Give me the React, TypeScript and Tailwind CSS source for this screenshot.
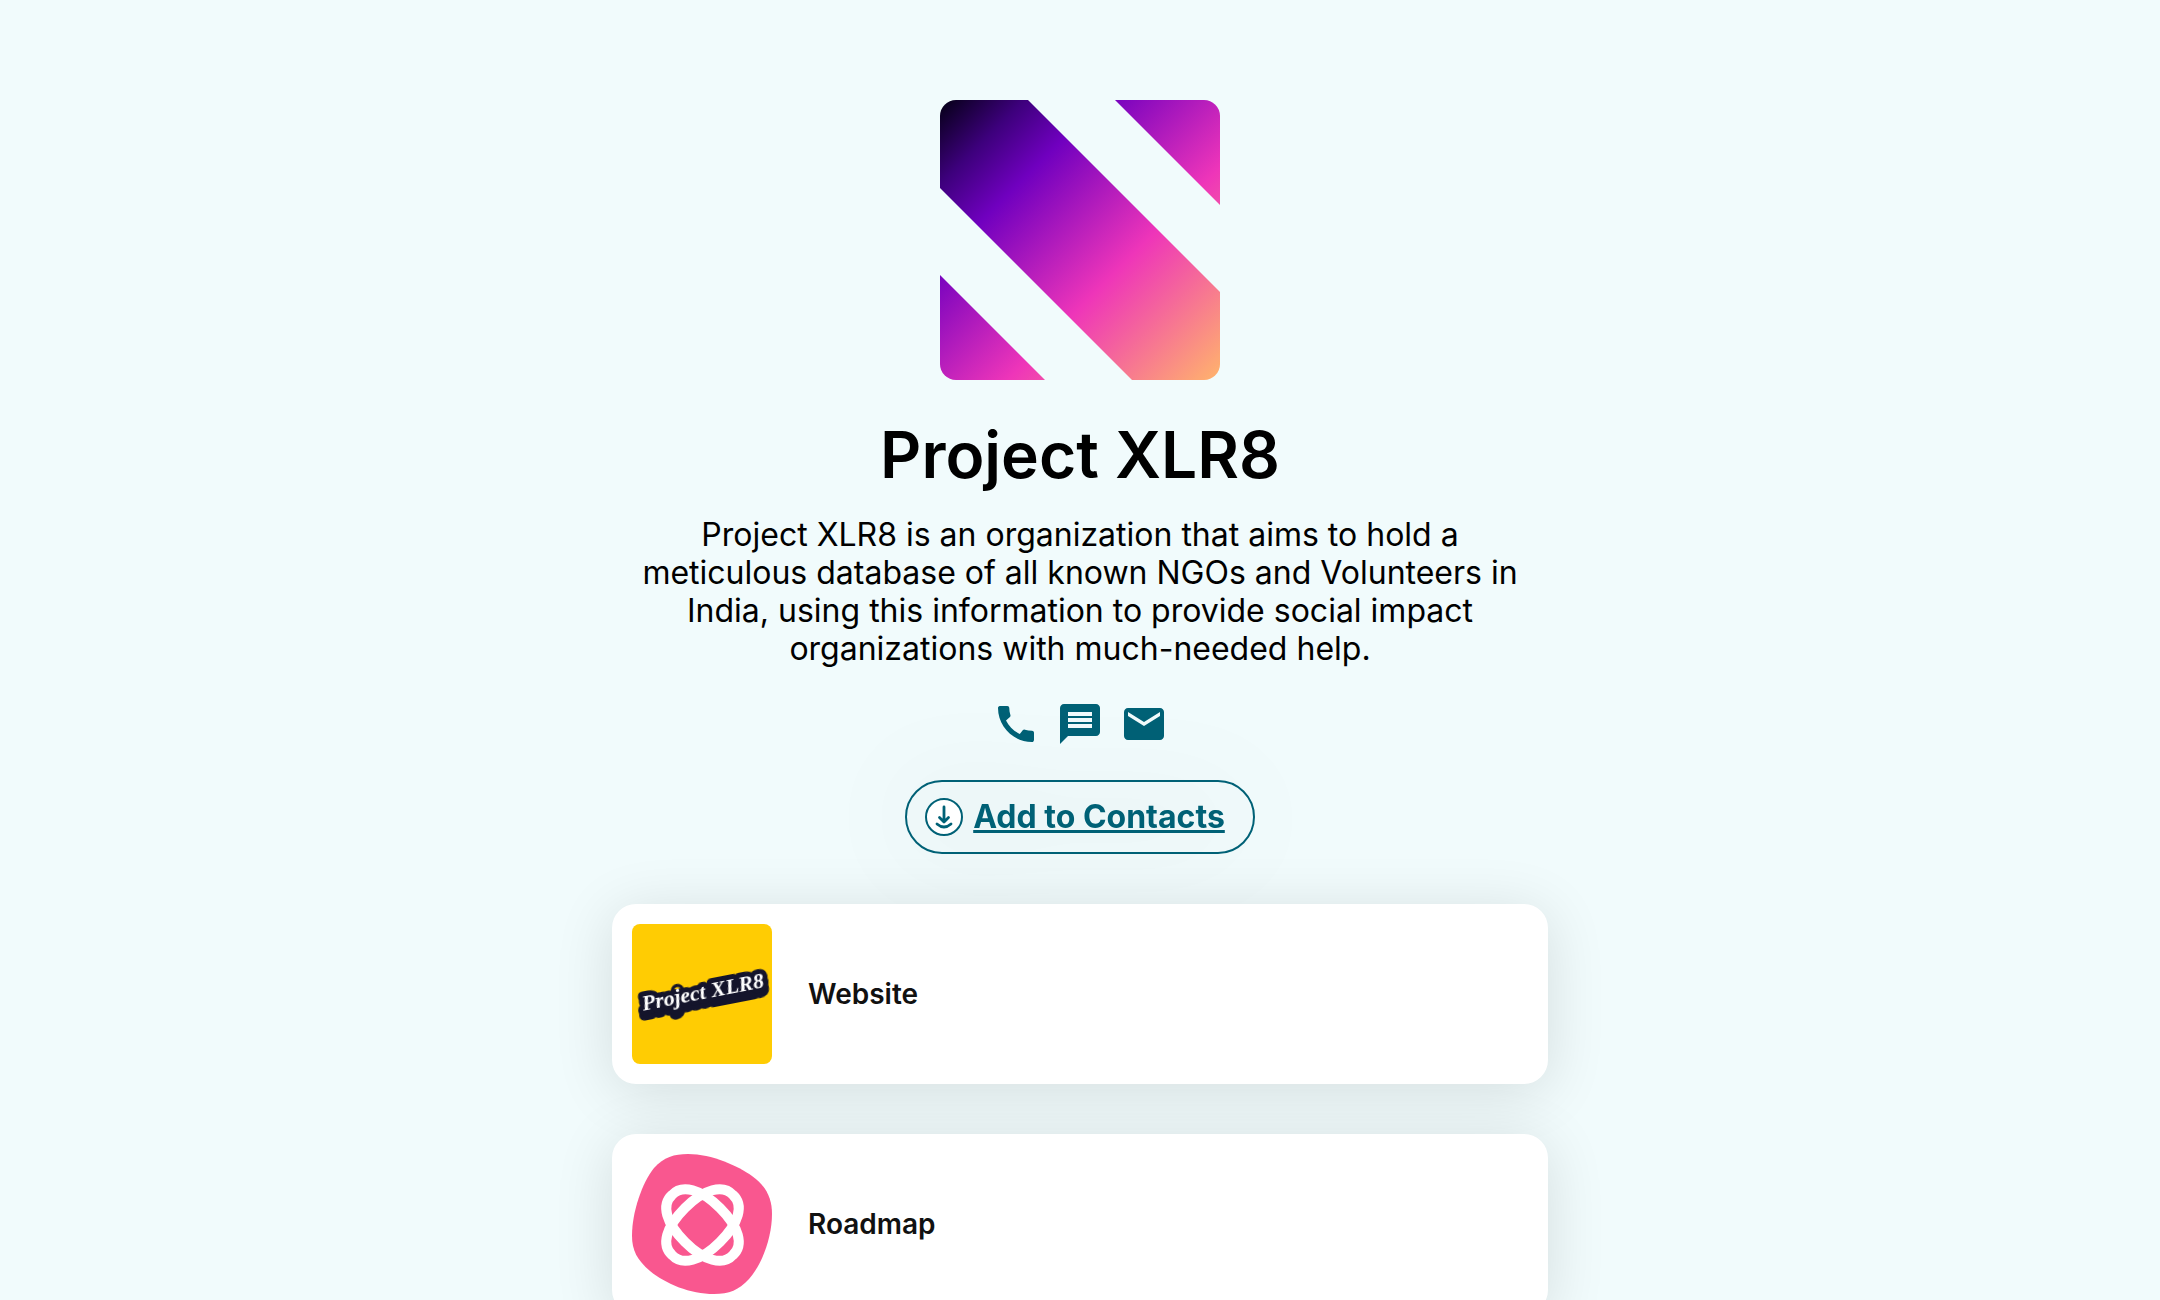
import { MdCall, MdEmail, MdMessage } from "react-icons/md";

const FONT = "font-['Inter',sans-serif] [font-optical-sizing:none]";

function BrandMark() {
  return (
    <svg viewBox="0 0 280 280" className="size-70 rounded-2xl" role="img" aria-label="Project XLR8 logo">
      <defs>
        <linearGradient id="brand" x1="0" y1="0" x2="280" y2="280" gradientUnits="userSpaceOnUse">
          <stop offset="0" stopColor="#040014" />
          <stop offset="0.15" stopColor="#3d007c" />
          <stop offset="0.29" stopColor="#7000bf" />
          <stop offset="0.62" stopColor="#ee35b9" />
          <stop offset="1" stopColor="#ffb46c" />
        </linearGradient>
      </defs>
      <path d="M0 0H88L280 192V280H192L0 88Z" fill="url(#brand)" />
      <path d="M175 0H280V105Z" fill="url(#brand)" />
      <path d="M0 175L105 280H0Z" fill="url(#brand)" />
    </svg>
  );
}

function WebsiteThumb() {
  return (
    <svg viewBox="0 0 140 140" className="size-35 shrink-0 rounded-lg bg-[#ffcc03]" aria-hidden="true">
      <g transform="rotate(-11 71 69)" className="drop-shadow-[0_5px_0_#14142b]">
        <text
          x="71"
          y="75"
          fontFamily="Liberation Serif, serif"
          fontStyle="italic"
          fontWeight="700"
          fontSize="22"
          textAnchor="middle"
          fill="#fff"
          stroke="#14142b"
          strokeWidth="10"
          strokeLinejoin="round"
          paintOrder="stroke"
        >
          Project XLR8
        </text>
      </g>
    </svg>
  );
}

function RoadmapThumb() {
  return (
    <svg viewBox="0 0 140 140" className="size-35 shrink-0" aria-hidden="true">
      <path
        d="M56 0C80 0 106 12 120 22C134 32 140 44 140 60C140 82 131 109 117 125C107 136 97 140 82 140C58 140 34 130 18 117C5 106 0 96 0 82C0 58 10 29 22 14C32 3 42 0 56 0Z"
        fill="#f9578f"
      />
      <g fill="none" stroke="#fff" strokeWidth="10">
        <path d="M40 41C50 30 69 35 88 54C107 73 112 91 101 101C91 112 72 107 53 88C34 69 29 51 40 41Z" />
        <path d="M101 41C91 30 72 35 53 54C34 73 29 91 40 101C50 112 69 107 88 88C107 69 112 51 101 41Z" />
      </g>
    </svg>
  );
}

function DownloadIcon() {
  return (
    <svg viewBox="0 0 38 38" className="size-[38px]" fill="none" stroke="#006176" aria-hidden="true">
      <circle cx="19" cy="19" r="18" fill="#fff" strokeWidth="2" />
      <path d="M19 9V23M14.500 19.500L19 24L23.500 19.500" strokeWidth="2.800" strokeLinecap="round" strokeLinejoin="round" />
      <path d="M12 26Q19 32 26 26" strokeWidth="2.800" strokeLinecap="round" />
    </svg>
  );
}

const contacts = [
  { label: "Call", href: "tel:+910000000000", Icon: MdCall },
  { label: "Message", href: "sms:+910000000000", Icon: MdMessage },
  { label: "Email", href: "mailto:hello@example.com", Icon: MdEmail },
];

const links = [
  { label: "Website", href: "#website", Thumb: WebsiteThumb },
  { label: "Roadmap", href: "#roadmap", Thumb: RoadmapThumb },
];

export default function App() {
  return (
    <div className={`${FONT} h-screen overflow-hidden bg-[#f1fbfc] text-black`}>
      <main className="mx-auto flex max-w-[936px] flex-col items-center pt-25">
        <BrandMark />
        <h1 className="mt-9 text-[64px] leading-[78px] font-semibold">Project XLR8</h1>
        <p className="mt-[22px] max-w-[900px] text-center text-[32px] leading-[38px]">
          Project XLR8 is an organization that aims to hold a meticulous database of all known NGOs and Volunteers in
          India, using this information to provide social impact organizations with much-needed help.
        </p>
        <nav aria-label="Contact" className="mt-8 flex gap-4 text-[#006176]">
          {contacts.map(({ label, href, Icon }) => (
            <a key={label} href={href} aria-label={label}>
              <Icon className="size-12" />
            </a>
          ))}
        </nav>
        <a
          href="#contact-card"
          className="mt-8 flex items-center gap-2.5 rounded-full border-2 border-[#006176] py-4 pr-7 pl-[18px] text-[32px] leading-[38px] font-bold text-[#006176] drop-shadow-[0_0_50px_rgba(0,0,0,0.12)]"
        >
          <DownloadIcon />
          <span className="underline">Add to Contacts</span>
        </a>
        <div className="relative mt-12.5 flex w-full flex-col gap-12.5">
          {links.map(({ label, href, Thumb }) => (
            <a
              key={label}
              href={href}
              className="flex items-center gap-9 rounded-3xl bg-white p-5 text-[28px] leading-[34px] font-semibold text-[#111] shadow-[0_8px_60px_rgba(0,0,0,0.12)]"
            >
              <Thumb />
              <span>{label}</span>
            </a>
          ))}
        </div>
      </main>
    </div>
  );
}
